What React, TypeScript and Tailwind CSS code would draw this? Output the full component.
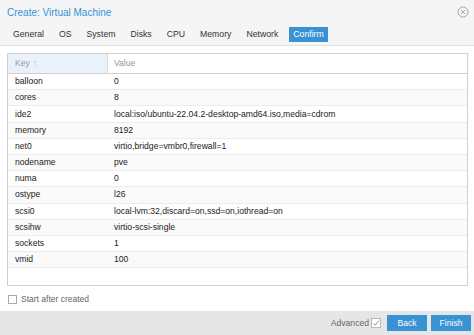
import { useState } from "react";

type Row = { k: string; v: string };

const rows: Row[] = [
  { k: "balloon", v: "0" },
  { k: "cores", v: "8" },
  { k: "ide2", v: "local:iso/ubuntu-22.04.2-desktop-amd64.iso,media=cdrom" },
  { k: "memory", v: "8192" },
  { k: "net0", v: "virtio,bridge=vmbr0,firewall=1" },
  { k: "nodename", v: "pve" },
  { k: "numa", v: "0" },
  { k: "ostype", v: "l26" },
  { k: "scsi0", v: "local-lvm:32,discard=on,ssd=on,iothread=on" },
  { k: "scsihw", v: "virtio-scsi-single" },
  { k: "sockets", v: "1" },
  { k: "vmid", v: "100" },
];

const tabs = ["General", "OS", "System", "Disks", "CPU", "Memory", "Network", "Confirm"];

export default function App() {
  const [startAfter, setStartAfter] = useState(false);

  return (
    <div className="flex h-[335px] w-[474px] flex-col bg-white font-['Liberation_Sans',Arial,sans-serif] text-[#222]">
      {/* title + tabs */}
      <div className="border-b border-[#e2e2e2] bg-[#f5f5f5]">
        <div className="flex h-[24px] items-center justify-between pl-[7px] pr-[5px]">
          <div className="text-[10px] text-[#3892d4]">Create: Virtual Machine</div>
          <svg width="12" height="12" viewBox="0 0 12 12" className="text-[#a0a0a0]">
            <circle cx="6" cy="6" r="5" fill="none" stroke="currentColor" strokeWidth="0.9" />
            <path d="M4 4 L8 8 M8 4 L4 8" stroke="currentColor" strokeWidth="0.9" />
          </svg>
        </div>
        <div className="flex h-[21px] items-center gap-[7px] pl-[9px]">
          {tabs.map((t) => (
            <div
              key={t}
              className={
                t === "Confirm"
                  ? "flex h-[15px] items-center bg-[#3892d4] px-[4px] text-[8.7px] text-white"
                  : "flex h-[15px] items-center px-[4px] text-[8.7px] text-[#333]"
              }
            >
              {t}
            </div>
          ))}
        </div>
      </div>

      {/* grid */}
      <div className="flex flex-1 flex-col px-[7px] pt-[7px]">
        <div className="h-[233px] w-[461px] border border-[#d0d0d0] text-[8.6px]">
          <div className="flex h-[20px] border-b border-[#d0d0d0] text-[#999]">
            <div className="flex w-[100px] items-center border-r border-[#dcdcdc] bg-[#e9f2fa] pl-[7px]">
              Key <span className="ml-[3px] text-[#a9bccd]">↑</span>
            </div>
            <div className="flex flex-1 items-center pl-[6px]">Value</div>
          </div>
          {rows.map((r, i) => (
            <div
              key={r.k}
              className={
                i % 2 === 1
                  ? "flex h-[16.2px] items-center border-b border-[#ececec] bg-[#fafafa]"
                  : "flex h-[16.2px] items-center border-b border-[#ececec] bg-white"
              }
            >
              <div className="w-[100px] pl-[7px]">{r.k}</div>
              <div className="flex-1 pl-[6px]">{r.v}</div>
            </div>
          ))}
        </div>

        <label className="mt-[7px] flex items-center gap-[4px] pl-[1px] text-[8.5px] text-[#666]">
          <input type="checkbox" className="hidden" checked={startAfter} onChange={(e) => setStartAfter(e.target.checked)} />
          <span className="h-[9px] w-[9px] border border-[#aaa] bg-white" />
          Start after created
        </label>
      </div>

      {/* footer */}
      <div className="flex h-[24px] items-center justify-end gap-[4px] bg-[#e6e6e6] pr-[3px]">
        <div className="flex items-center gap-[2px] text-[8.6px] text-[#666]">
          Advanced
          <svg width="10" height="10" viewBox="0 0 10 10">
            <rect x="0.5" y="0.5" width="9" height="9" fill="white" stroke="#aaa" strokeWidth="0.8" />
            <path d="M2.2 5.2 L4.2 7.2 L8 2.6" fill="none" stroke="#888" strokeWidth="0.9" />
          </svg>
        </div>
        <button className="ml-[2px] h-[16px] w-[40px] bg-[#3892d4] text-[8.6px] text-white">Back</button>
        <button className="h-[16px] w-[40px] bg-[#3892d4] text-[8.6px] text-white">Finish</button>
      </div>
    </div>
  );
}
